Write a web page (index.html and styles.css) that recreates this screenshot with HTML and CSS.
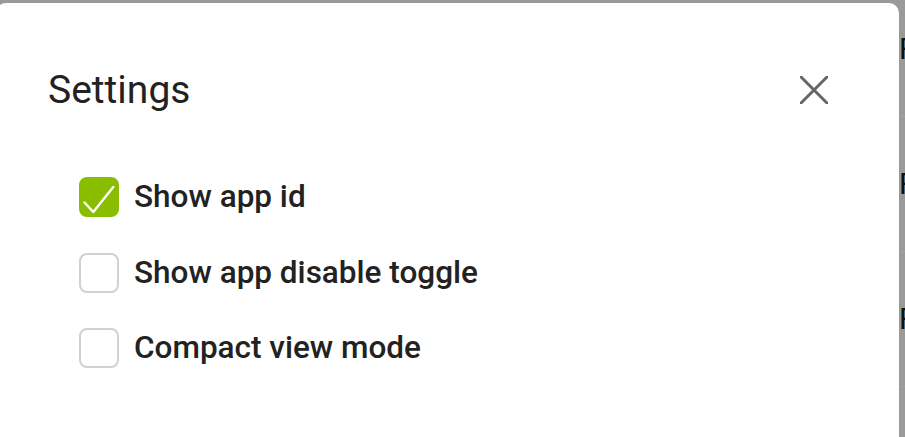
FILE: index.html
```html
<!DOCTYPE html>
<html lang="en">
<head>
<meta charset="utf-8">
<title>Settings</title>
<link rel="stylesheet" href="styles.css">
</head>
<body>
<div class="backdrop">
  <div class="bg-row"><span class="bg-cell">F</span></div>
  <div class="bg-row"><span class="bg-cell">F</span></div>
  <div class="bg-row"><span class="bg-cell">F</span></div>
  <div class="bg-row"><span class="bg-cell">F</span></div>
</div>
<div class="modal" role="dialog" aria-label="Settings">
  <div class="modal-header">
    <h2 class="modal-title">Settings</h2>
    <button class="close-btn" aria-label="Close">
      <svg width="28" height="28" viewBox="0 0 28 28"><path d="M1 1L27 27M27 1L1 27" stroke="#666" stroke-width="3" stroke-linecap="round" fill="none"/></svg>
    </button>
  </div>
  <ul class="options">
    <li class="option">
      <span class="box checked">
        <svg width="40" height="40" viewBox="0 0 40 40"><path d="M5.5 25.5L14.3 35L34.3 10" stroke="#fff" stroke-width="2.4" fill="none" stroke-linecap="round" stroke-linejoin="round"/></svg>
      </span>
      <span class="label">Show app id</span>
    </li>
    <li class="option">
      <span class="box"></span>
      <span class="label">Show app disable toggle</span>
    </li>
    <li class="option">
      <span class="box"></span>
      <span class="label">Compact view mode</span>
    </li>
  </ul>
</div>
</body>
</html>
```
FILE: styles.css
```css
html, body {
  margin: 0;
  padding: 0;
  height: 100%;
  overflow: hidden;
}
body {
  background: #9a9a9a;
  font-family: Roboto, "Liberation Sans", Arial, sans-serif;
}
.backdrop {
  margin-top: -18px;
  height: 455px;
  overflow: hidden;
}
.bg-row {
  height: 134px;
  border-bottom: 1px solid #a3a3a3;
  display: flex;
  align-items: center;
  padding-left: 899px;
}
.bg-cell {
  font-size: 30px;
  color: #111;
  line-height: 1;
}
.modal {
  position: absolute;
  left: -4px;
  top: 3px;
  width: 903px;
  height: 434px;
  background: #fff;
  border-radius: 10px 10px 0 0;
  padding: 64px 65px 0 52px;
  box-sizing: border-box;
}
.modal-header {
  display: flex;
  align-items: center;
  justify-content: space-between;
}
.modal-title {
  margin: 0;
  font-size: 39px;
  line-height: 46px;
  font-weight: 400;
  color: #222;
}
.close-btn {
  width: 40px;
  height: 40px;
  padding: 0;
  border: 0;
  background: transparent;
  display: flex;
  align-items: center;
  justify-content: center;
}
.close-btn svg {
  display: block;
}
.options {
  list-style: none;
  margin: 64px 0 0 31px;
  padding: 0;
  display: flex;
  flex-direction: column;
  gap: 35.5px;
}
.option {
  display: flex;
  align-items: center;
  gap: 15px;
  height: 40px;
}
.box {
  width: 40px;
  height: 40px;
  box-sizing: border-box;
  border: 2px solid #d0d0d5;
  border-radius: 8px;
  flex: none;
  position: relative;
}
.box.checked {
  background: #88bd00;
  border-color: #88bd00;
}
.box.checked svg {
  position: absolute;
  left: -2px;
  top: -2px;
}
.label {
  font-size: 31.5px;
  font-weight: 500;
  line-height: 38px;
  color: #222;
}
```
